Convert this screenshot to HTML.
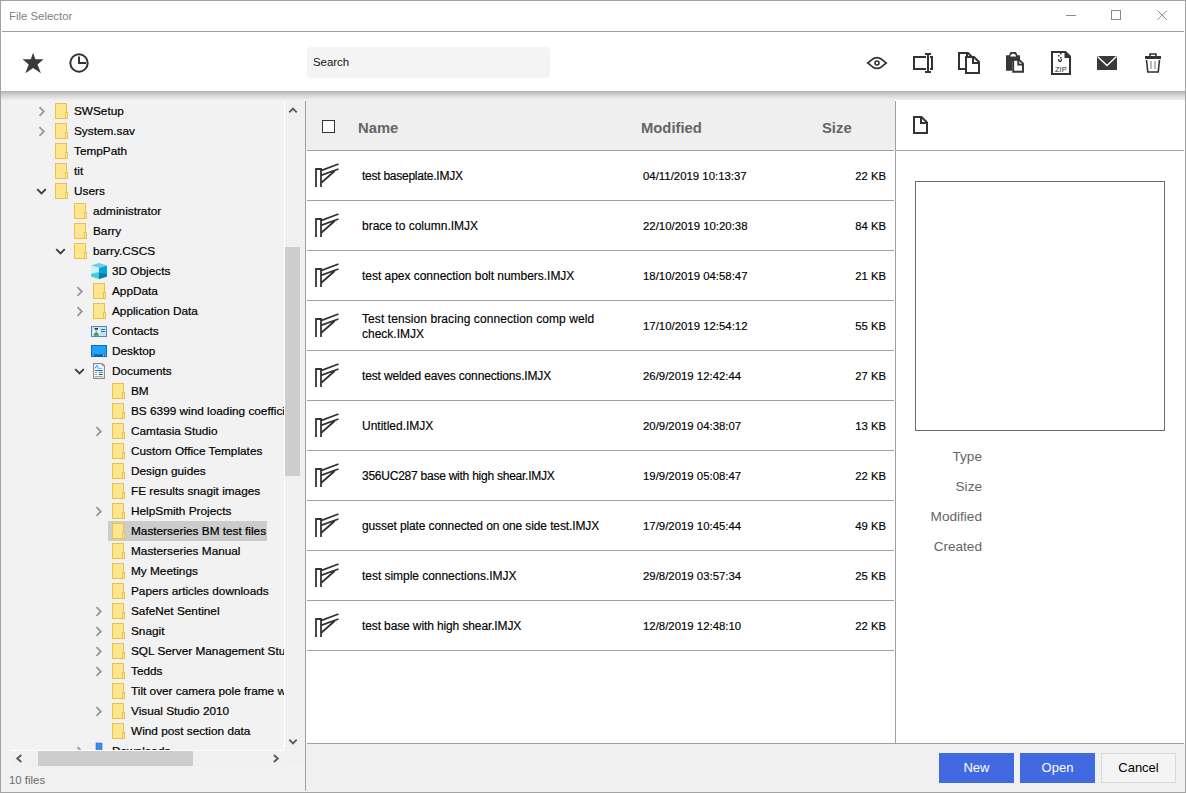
<!DOCTYPE html>
<html><head><meta charset="utf-8">
<style>
*{margin:0;padding:0;box-sizing:border-box}
html,body{width:1186px;height:793px;overflow:hidden;background:#fff;font-family:"Liberation Sans", sans-serif;}
.abs{position:absolute}
#win{position:absolute;left:0;top:0;width:1186px;height:793px;border:1px solid #a2a2a2;background:#fff;overflow:hidden}
.title{position:absolute;left:9px;top:1px;height:31px;line-height:31px;font-size:11.4px;color:#7f7f7f}
.tline{position:absolute;left:2px;top:31px;width:1182px;height:1px;background:#9f9f9f}
.ic{position:absolute;overflow:visible}
.search{position:absolute;left:307px;top:47px;width:243px;height:31px;background:#f4f4f4;border-radius:4px}
.search span{position:absolute;left:6px;top:0;line-height:31px;font-size:11.4px;color:#111}
.shadow{position:absolute;left:1px;top:91px;width:1184px;height:9px;background:linear-gradient(#b2b2b2,#d4d4d4 45%,#f0f0f0)}
.tree{position:absolute;left:1px;top:100px;width:283px;height:650px;background:#f2f2f2;overflow:hidden}
.treein{position:absolute;left:-1px;top:-100px;width:283px;height:900px}
.tt{position:absolute;white-space:nowrap;font-size:11.8px;line-height:20px;color:#000;-webkit-text-stroke:0.2px #000}
.sel{position:absolute;background:#cccccc}
.vline{position:absolute;background:#a0a0a0}
.row{position:absolute;left:306px;width:588px;height:50px}
.row::after{content:"";position:absolute;left:1px;right:0;bottom:0;height:1px;background:#a0a0a0}
.fic{position:absolute;left:9px;top:12px;overflow:visible}
.nm{position:absolute;left:56px;top:1px;width:260px;height:49px;display:flex;align-items:center;font-size:12px;line-height:14.6px;color:#000;-webkit-text-stroke:0.15px #000}
.dt{position:absolute;left:337px;top:1px;line-height:49px;font-size:11.4px;color:#000;-webkit-text-stroke:0.15px #000;white-space:nowrap}
.sz{position:absolute;right:8px;top:1px;line-height:49px;font-size:11.3px;color:#000;-webkit-text-stroke:0.15px #000;white-space:nowrap}
.hdr{position:absolute;font-size:14.8px;font-weight:bold;color:#666;line-height:49px;top:104px}
.lbl{position:absolute;left:880px;width:102px;text-align:right;font-size:13.6px;color:#666;line-height:30px;margin-top:1px}
.btn{position:absolute;top:753px;width:75px;height:30px;line-height:30px;text-align:center;font-size:13px}
</style></head><body>
<div id="win">
</div>
<div class="abs" style="left:1px;top:750px;width:304px;height:42px;background:#f2f2f2"></div>
<div class="title">File Selector</div>
<div class="tline"></div>
<!-- window controls -->
<svg class="ic" style="left:1060px;top:5px" width="120" height="22" viewBox="1060 5 120 22">
 <path d="M1066 15.5 H1076" stroke="#8a8a8a" stroke-width="1"/>
 <rect x="1111.5" y="10.5" width="9" height="9" fill="none" stroke="#8a8a8a"/>
 <path d="M1157.5 10.5 L1166.8 19.8 M1166.8 10.5 L1157.5 19.8" stroke="#8a8a8a" stroke-width="1"/>
</svg>
<!-- toolbar icons -->
<svg class="ic" style="left:0;top:32px" width="1186" height="58" viewBox="0 32 1186 58">
 <polygon points="33.1,52.8 35.4,59.2 43.6,59.2 37.5,64.4 40.9,73.3 33.1,68 25.3,73.3 28.7,64.4 22.6,59.2 30.8,59.2" fill="#3a3a3a"/>
 <circle cx="79" cy="63" r="8.7" fill="none" stroke="#333" stroke-width="2"/>
 <path d="M79 56.5 V63 H86" fill="none" stroke="#333" stroke-width="2"/>
 <path d="M867.8 63 L872.3 59.3 Q877 55.9 881.7 59.3 L886.2 63 L881.7 66.7 Q877 70.1 872.3 66.7 Z" fill="none" stroke="#333" stroke-width="1.7" stroke-linejoin="miter"/>
 <circle cx="877" cy="63" r="2" fill="none" stroke="#333" stroke-width="1.6"/>
 <path d="M926 57 H914 V69 H926" fill="none" stroke="#333" stroke-width="2"/>
 <path d="M925 54 H931 M928 54 V72 M925 72 H931 M930 57 H932 V69 H930" fill="none" stroke="#333" stroke-width="2"/>
 <path d="M966 69 H959 V53 H968 L971.5 56.5 M967 53 V57" fill="none" stroke="#333" stroke-width="2"/>
 <path d="M966 57 H974 L979 62 V73 H966 Z M973 57 V63 H979" fill="none" stroke="#333" stroke-width="2"/>
 <path d="M1006 55.2 H1009 L1010.5 52 H1016 L1017.5 55.2 H1020 V61 H1012 V70.8 H1006 Z" fill="#383838"/><path d="M1010.3 56.4 Q1010.6 53.7 1013.2 53.7 Q1015.8 53.7 1016.1 56.4 Z" fill="#fff"/>
 <path d="M1013.2 59.9 H1019.2 L1023 63.7 V71.8 H1013.2 Z" fill="#fff" stroke="#333" stroke-width="1.9"/><path d="M1018.3 59.9 V64.6 H1023" fill="none" stroke="#333" stroke-width="1.9"/>
 <path d="M1052 52 H1065.5 L1070 56.5 V74 H1052 Z" fill="none" stroke="#333" stroke-width="2"/>
 <polygon points="1064.5,52 1071,58 1064.5,58" fill="#333"/>
 <rect x="1060" y="53" width="1.5" height="1.5" fill="#333"/><rect x="1058" y="55" width="1.5" height="1.5" fill="#333"/><rect x="1060" y="57" width="1.5" height="1.5" fill="#333"/>
 <path d="M1058.5 59 Q1058.5 61.5 1060.5 61.5 Q1061.5 61 1061.5 59" fill="none" stroke="#333" stroke-width="1.3"/>
 <text x="1055" y="72" font-family="Liberation Sans" font-size="7.5" fill="#333">ZIP</text>
 <rect x="1097" y="56" width="20" height="14" fill="#3a3a3a"/>
 <path d="M1097.5 56.5 L1107 65.5 L1116.5 56.5" fill="none" stroke="#fff" stroke-width="1.4"/>
 <rect x="1145" y="56" width="16" height="3" fill="#333"/>
 <path d="M1150 56 V54 H1156 V56" fill="none" stroke="#333" stroke-width="1.6"/>
 <path d="M1146.5 60 L1147.8 72 H1158.2 L1159.5 60" fill="none" stroke="#333" stroke-width="1.6"/>
 <path d="M1151 61 V69 M1155 61 V69" stroke="#8a8a8a" stroke-width="1.2"/>
</svg>
<div class="search"><span>Search</span></div>
<div class="shadow"></div>
<!-- tree -->
<div class="tree"><div class="treein">
<svg class="ic" style="left:38px;top:106px" width="8" height="11" viewBox="0 0 8 11"><path d="M1.5 1.2 L5.8 5.5 L1.5 9.8" fill="none" stroke="#999" stroke-width="1.8"/></svg>
<svg class="ic" style="left:55px;top:103px" width="14" height="17" viewBox="0 0 14 17"><rect x="0.5" y="0.5" width="11" height="15" fill="#fde68e" stroke="#e8c24a"/><rect x="10.5" y="9.5" width="2" height="6" fill="#fdeaa0" stroke="#e8c24a"/></svg>
<div class="tt" style="left:74px;top:101px">SWSetup</div>
<svg class="ic" style="left:38px;top:126px" width="8" height="11" viewBox="0 0 8 11"><path d="M1.5 1.2 L5.8 5.5 L1.5 9.8" fill="none" stroke="#999" stroke-width="1.8"/></svg>
<svg class="ic" style="left:55px;top:123px" width="14" height="17" viewBox="0 0 14 17"><rect x="0.5" y="0.5" width="11" height="15" fill="#fde68e" stroke="#e8c24a"/><rect x="10.5" y="9.5" width="2" height="6" fill="#fdeaa0" stroke="#e8c24a"/></svg>
<div class="tt" style="left:74px;top:121px">System.sav</div>

<svg class="ic" style="left:55px;top:143px" width="14" height="17" viewBox="0 0 14 17"><rect x="0.5" y="0.5" width="11" height="15" fill="#fde68e" stroke="#e8c24a"/><rect x="10.5" y="9.5" width="2" height="6" fill="#fdeaa0" stroke="#e8c24a"/></svg>
<div class="tt" style="left:74px;top:141px">TempPath</div>

<svg class="ic" style="left:55px;top:163px" width="14" height="17" viewBox="0 0 14 17"><rect x="0.5" y="0.5" width="11" height="15" fill="#fde68e" stroke="#e8c24a"/><rect x="10.5" y="9.5" width="2" height="6" fill="#fdeaa0" stroke="#e8c24a"/></svg>
<div class="tt" style="left:74px;top:161px">tit</div>
<svg class="ic" style="left:36px;top:188px" width="11" height="8" viewBox="0 0 11 8"><path d="M1.2 1.2 L5.5 5.5 L9.8 1.2" fill="none" stroke="#3a3a3a" stroke-width="1.8"/></svg>
<svg class="ic" style="left:55px;top:183px" width="14" height="17" viewBox="0 0 14 17"><rect x="0.5" y="0.5" width="11" height="15" fill="#fde68e" stroke="#e8c24a"/><rect x="10.5" y="9.5" width="2" height="6" fill="#fdeaa0" stroke="#e8c24a"/></svg>
<div class="tt" style="left:74px;top:181px">Users</div>

<svg class="ic" style="left:74px;top:203px" width="14" height="17" viewBox="0 0 14 17"><rect x="0.5" y="0.5" width="11" height="15" fill="#fde68e" stroke="#e8c24a"/><rect x="10.5" y="9.5" width="2" height="6" fill="#fdeaa0" stroke="#e8c24a"/></svg>
<div class="tt" style="left:93px;top:201px">administrator</div>

<svg class="ic" style="left:74px;top:223px" width="14" height="17" viewBox="0 0 14 17"><rect x="0.5" y="0.5" width="11" height="15" fill="#fde68e" stroke="#e8c24a"/><rect x="10.5" y="9.5" width="2" height="6" fill="#fdeaa0" stroke="#e8c24a"/></svg>
<div class="tt" style="left:93px;top:221px">Barry</div>
<svg class="ic" style="left:55px;top:248px" width="11" height="8" viewBox="0 0 11 8"><path d="M1.2 1.2 L5.5 5.5 L9.8 1.2" fill="none" stroke="#3a3a3a" stroke-width="1.8"/></svg>
<svg class="ic" style="left:74px;top:243px" width="14" height="17" viewBox="0 0 14 17"><rect x="0.5" y="0.5" width="11" height="15" fill="#fde68e" stroke="#e8c24a"/><rect x="10.5" y="9.5" width="2" height="6" fill="#fdeaa0" stroke="#e8c24a"/></svg>
<div class="tt" style="left:93px;top:241px">barry.CSCS</div>

<svg class="ic" style="left:91px;top:263px" width="17" height="17" viewBox="0 0 17 17"><polygon points="0,2.5 8,0 16,2.5 8,5" fill="#62d2e4"/><polygon points="0,2.5 8,5 8,16 0,13.5" fill="#ccf0f5"/><polygon points="0,11 8,9 8,16 0,13.5" fill="#3ccfe0"/><polygon points="8,5 16,2.5 16,13.5 8,16" fill="#04a6d6"/><polygon points="8,10 16,11 16,13.5 8,16" fill="#0a7aa6"/></svg>
<div class="tt" style="left:112px;top:261px">3D Objects</div>
<svg class="ic" style="left:76px;top:286px" width="8" height="11" viewBox="0 0 8 11"><path d="M1.5 1.2 L5.8 5.5 L1.5 9.8" fill="none" stroke="#999" stroke-width="1.8"/></svg>
<svg class="ic" style="left:93px;top:283px" width="14" height="17" viewBox="0 0 14 17"><rect x="0.5" y="0.5" width="11" height="15" fill="#fde68e" stroke="#e8c24a"/><rect x="10.5" y="9.5" width="2" height="6" fill="#fdeaa0" stroke="#e8c24a"/></svg>
<div class="tt" style="left:112px;top:281px">AppData</div>
<svg class="ic" style="left:76px;top:306px" width="8" height="11" viewBox="0 0 8 11"><path d="M1.5 1.2 L5.8 5.5 L1.5 9.8" fill="none" stroke="#999" stroke-width="1.8"/></svg>
<svg class="ic" style="left:93px;top:303px" width="14" height="17" viewBox="0 0 14 17"><rect x="0.5" y="0.5" width="11" height="15" fill="#fde68e" stroke="#e8c24a"/><rect x="10.5" y="9.5" width="2" height="6" fill="#fdeaa0" stroke="#e8c24a"/></svg>
<div class="tt" style="left:112px;top:301px">Application Data</div>

<svg class="ic" style="left:91px;top:323px" width="17" height="17" viewBox="0 0 17 17"><rect x="0.5" y="3.5" width="15" height="10" fill="#c5e2f6" stroke="#4a88c0"/><circle cx="5.2" cy="8.6" r="3.4" fill="#eef6fb"/><rect x="3.6" y="5" width="3.4" height="1.8" fill="#3a3028"/><rect x="4.3" y="6.5" width="2" height="2.6" fill="#d4a884"/><path d="M2.8 12.8 Q3 9.4 5.3 9.2 Q7.6 9.4 7.8 12.8 Z" fill="#3c9a58"/><rect x="10" y="6" width="4" height="1" fill="#3a6a98"/><rect x="10" y="8" width="4" height="1" fill="#3a6a98"/></svg>
<div class="tt" style="left:112px;top:321px">Contacts</div>

<svg class="ic" style="left:91px;top:343px" width="17" height="17" viewBox="0 0 17 17"><rect x="0.5" y="2.5" width="15" height="11" fill="#1ea2fb" stroke="#0a6cb8"/><rect x="1" y="11.5" width="14" height="1.6" fill="#0d5a98"/><rect x="1.5" y="11.8" width="1" height="1" fill="#fff"/><rect x="12" y="11.8" width="1" height="1" fill="#fff"/><rect x="14" y="11.8" width="1" height="1" fill="#fff"/></svg>
<div class="tt" style="left:112px;top:341px">Desktop</div>
<svg class="ic" style="left:74px;top:368px" width="11" height="8" viewBox="0 0 11 8"><path d="M1.2 1.2 L5.5 5.5 L9.8 1.2" fill="none" stroke="#3a3a3a" stroke-width="1.8"/></svg>
<svg class="ic" style="left:93px;top:363px" width="14" height="17" viewBox="0 0 14 17"><path d="M0.6 0.6 H9.2 L11.4 2.8 V15.4 H0.6 Z" fill="#fff" stroke="#8a8a8a" stroke-width="1.1"/><path d="M9.2 0.6 V2.8 H11.4" fill="none" stroke="#8a8a8a" stroke-width="1"/><path d="M1.8 5.6 L3.9 2.2 L4.5 5.4" fill="none" stroke="#3a9ae8" stroke-width="1"/><rect x="5.2" y="4.8" width="4" height="1" fill="#5ab0ea"/><rect x="5.4" y="2.9" width="1" height="1" fill="#5ab0ea"/><rect x="1.8" y="7" width="8" height="1.1" fill="#0a7ad0"/><rect x="1.8" y="9" width="2.6" height="0.9" fill="#a0a0a0"/><rect x="5.8" y="8.9" width="3.9" height="1.1" fill="#4a8ef0"/><rect x="1.8" y="11" width="2.6" height="0.9" fill="#a0a0a0"/><rect x="5.8" y="10.9" width="3.9" height="1.1" fill="#2a5a30"/><rect x="1.8" y="13" width="7.9" height="0.9" fill="#a0a0a0"/></svg>
<div class="tt" style="left:112px;top:361px">Documents</div>

<svg class="ic" style="left:112px;top:383px" width="14" height="17" viewBox="0 0 14 17"><rect x="0.5" y="0.5" width="11" height="15" fill="#fde68e" stroke="#e8c24a"/><rect x="10.5" y="9.5" width="2" height="6" fill="#fdeaa0" stroke="#e8c24a"/></svg>
<div class="tt" style="left:131px;top:381px">BM</div>

<svg class="ic" style="left:112px;top:403px" width="14" height="17" viewBox="0 0 14 17"><rect x="0.5" y="0.5" width="11" height="15" fill="#fde68e" stroke="#e8c24a"/><rect x="10.5" y="9.5" width="2" height="6" fill="#fdeaa0" stroke="#e8c24a"/></svg>
<div class="tt" style="left:131px;top:401px">BS 6399 wind loading coefficients</div>
<svg class="ic" style="left:95px;top:426px" width="8" height="11" viewBox="0 0 8 11"><path d="M1.5 1.2 L5.8 5.5 L1.5 9.8" fill="none" stroke="#999" stroke-width="1.8"/></svg>
<svg class="ic" style="left:112px;top:423px" width="14" height="17" viewBox="0 0 14 17"><rect x="0.5" y="0.5" width="11" height="15" fill="#fde68e" stroke="#e8c24a"/><rect x="10.5" y="9.5" width="2" height="6" fill="#fdeaa0" stroke="#e8c24a"/></svg>
<div class="tt" style="left:131px;top:421px">Camtasia Studio</div>

<svg class="ic" style="left:112px;top:443px" width="14" height="17" viewBox="0 0 14 17"><rect x="0.5" y="0.5" width="11" height="15" fill="#fde68e" stroke="#e8c24a"/><rect x="10.5" y="9.5" width="2" height="6" fill="#fdeaa0" stroke="#e8c24a"/></svg>
<div class="tt" style="left:131px;top:441px">Custom Office Templates</div>

<svg class="ic" style="left:112px;top:463px" width="14" height="17" viewBox="0 0 14 17"><rect x="0.5" y="0.5" width="11" height="15" fill="#fde68e" stroke="#e8c24a"/><rect x="10.5" y="9.5" width="2" height="6" fill="#fdeaa0" stroke="#e8c24a"/></svg>
<div class="tt" style="left:131px;top:461px">Design guides</div>

<svg class="ic" style="left:112px;top:483px" width="14" height="17" viewBox="0 0 14 17"><rect x="0.5" y="0.5" width="11" height="15" fill="#fde68e" stroke="#e8c24a"/><rect x="10.5" y="9.5" width="2" height="6" fill="#fdeaa0" stroke="#e8c24a"/></svg>
<div class="tt" style="left:131px;top:481px">FE results snagit images</div>
<svg class="ic" style="left:95px;top:506px" width="8" height="11" viewBox="0 0 8 11"><path d="M1.5 1.2 L5.8 5.5 L1.5 9.8" fill="none" stroke="#999" stroke-width="1.8"/></svg>
<svg class="ic" style="left:112px;top:503px" width="14" height="17" viewBox="0 0 14 17"><rect x="0.5" y="0.5" width="11" height="15" fill="#fde68e" stroke="#e8c24a"/><rect x="10.5" y="9.5" width="2" height="6" fill="#fdeaa0" stroke="#e8c24a"/></svg>
<div class="tt" style="left:131px;top:501px">HelpSmith Projects</div>
<div class="sel" style="left:108px;top:521px;width:159px;height:20px"></div>

<svg class="ic" style="left:112px;top:523px" width="14" height="17" viewBox="0 0 14 17"><rect x="0.5" y="0.5" width="11" height="15" fill="#fde68e" stroke="#e8c24a"/><rect x="10.5" y="9.5" width="2" height="6" fill="#fdeaa0" stroke="#e8c24a"/></svg>
<div class="tt" style="left:131px;top:521px">Masterseries BM test files</div>

<svg class="ic" style="left:112px;top:543px" width="14" height="17" viewBox="0 0 14 17"><rect x="0.5" y="0.5" width="11" height="15" fill="#fde68e" stroke="#e8c24a"/><rect x="10.5" y="9.5" width="2" height="6" fill="#fdeaa0" stroke="#e8c24a"/></svg>
<div class="tt" style="left:131px;top:541px">Masterseries Manual</div>

<svg class="ic" style="left:112px;top:563px" width="14" height="17" viewBox="0 0 14 17"><rect x="0.5" y="0.5" width="11" height="15" fill="#fde68e" stroke="#e8c24a"/><rect x="10.5" y="9.5" width="2" height="6" fill="#fdeaa0" stroke="#e8c24a"/></svg>
<div class="tt" style="left:131px;top:561px">My Meetings</div>

<svg class="ic" style="left:112px;top:583px" width="14" height="17" viewBox="0 0 14 17"><rect x="0.5" y="0.5" width="11" height="15" fill="#fde68e" stroke="#e8c24a"/><rect x="10.5" y="9.5" width="2" height="6" fill="#fdeaa0" stroke="#e8c24a"/></svg>
<div class="tt" style="left:131px;top:581px">Papers articles downloads</div>
<svg class="ic" style="left:95px;top:606px" width="8" height="11" viewBox="0 0 8 11"><path d="M1.5 1.2 L5.8 5.5 L1.5 9.8" fill="none" stroke="#999" stroke-width="1.8"/></svg>
<svg class="ic" style="left:112px;top:603px" width="14" height="17" viewBox="0 0 14 17"><rect x="0.5" y="0.5" width="11" height="15" fill="#fde68e" stroke="#e8c24a"/><rect x="10.5" y="9.5" width="2" height="6" fill="#fdeaa0" stroke="#e8c24a"/></svg>
<div class="tt" style="left:131px;top:601px">SafeNet Sentinel</div>
<svg class="ic" style="left:95px;top:626px" width="8" height="11" viewBox="0 0 8 11"><path d="M1.5 1.2 L5.8 5.5 L1.5 9.8" fill="none" stroke="#999" stroke-width="1.8"/></svg>
<svg class="ic" style="left:112px;top:623px" width="14" height="17" viewBox="0 0 14 17"><rect x="0.5" y="0.5" width="11" height="15" fill="#fde68e" stroke="#e8c24a"/><rect x="10.5" y="9.5" width="2" height="6" fill="#fdeaa0" stroke="#e8c24a"/></svg>
<div class="tt" style="left:131px;top:621px">Snagit</div>
<svg class="ic" style="left:95px;top:646px" width="8" height="11" viewBox="0 0 8 11"><path d="M1.5 1.2 L5.8 5.5 L1.5 9.8" fill="none" stroke="#999" stroke-width="1.8"/></svg>
<svg class="ic" style="left:112px;top:643px" width="14" height="17" viewBox="0 0 14 17"><rect x="0.5" y="0.5" width="11" height="15" fill="#fde68e" stroke="#e8c24a"/><rect x="10.5" y="9.5" width="2" height="6" fill="#fdeaa0" stroke="#e8c24a"/></svg>
<div class="tt" style="left:131px;top:641px">SQL Server Management Studio</div>
<svg class="ic" style="left:95px;top:666px" width="8" height="11" viewBox="0 0 8 11"><path d="M1.5 1.2 L5.8 5.5 L1.5 9.8" fill="none" stroke="#999" stroke-width="1.8"/></svg>
<svg class="ic" style="left:112px;top:663px" width="14" height="17" viewBox="0 0 14 17"><rect x="0.5" y="0.5" width="11" height="15" fill="#fde68e" stroke="#e8c24a"/><rect x="10.5" y="9.5" width="2" height="6" fill="#fdeaa0" stroke="#e8c24a"/></svg>
<div class="tt" style="left:131px;top:661px">Tedds</div>

<svg class="ic" style="left:112px;top:683px" width="14" height="17" viewBox="0 0 14 17"><rect x="0.5" y="0.5" width="11" height="15" fill="#fde68e" stroke="#e8c24a"/><rect x="10.5" y="9.5" width="2" height="6" fill="#fdeaa0" stroke="#e8c24a"/></svg>
<div class="tt" style="left:131px;top:681px">Tilt over camera pole frame with</div>
<svg class="ic" style="left:95px;top:706px" width="8" height="11" viewBox="0 0 8 11"><path d="M1.5 1.2 L5.8 5.5 L1.5 9.8" fill="none" stroke="#999" stroke-width="1.8"/></svg>
<svg class="ic" style="left:112px;top:703px" width="14" height="17" viewBox="0 0 14 17"><rect x="0.5" y="0.5" width="11" height="15" fill="#fde68e" stroke="#e8c24a"/><rect x="10.5" y="9.5" width="2" height="6" fill="#fdeaa0" stroke="#e8c24a"/></svg>
<div class="tt" style="left:131px;top:701px">Visual Studio 2010</div>

<svg class="ic" style="left:112px;top:723px" width="14" height="17" viewBox="0 0 14 17"><rect x="0.5" y="0.5" width="11" height="15" fill="#fde68e" stroke="#e8c24a"/><rect x="10.5" y="9.5" width="2" height="6" fill="#fdeaa0" stroke="#e8c24a"/></svg>
<div class="tt" style="left:131px;top:721px">Wind post section data</div>
<svg class="ic" style="left:76px;top:746px" width="8" height="11" viewBox="0 0 8 11"><path d="M1.5 1.2 L5.8 5.5 L1.5 9.8" fill="none" stroke="#999" stroke-width="1.8"/></svg>
<svg class="ic" style="left:93px;top:743px" width="14" height="17" viewBox="0 0 14 17"><rect x="3" y="0" width="6" height="16" fill="#3a8ee8" stroke="#2a70c8" stroke-width="0.6"/></svg>
<div class="tt" style="left:112px;top:741px">Downloads</div>
</div></div>
<div class="abs" style="left:284px;top:100px;width:1px;height:650px;background:#fff"></div>
<!-- vertical scrollbar -->
<div class="abs" style="left:285px;top:100px;width:20px;height:666px;background:#f0f0f0"></div>
<div class="abs" style="left:285px;top:247px;width:15px;height:229px;background:#cdcdcd"></div>
<svg class="ic" style="left:284px;top:100px" width="21" height="650" viewBox="0 0 21 650">
 <path d="M5.3 12.4 L9 8.6 L12.7 12.4" fill="none" stroke="#5a5a5a" stroke-width="1.9"/>
 <path d="M5.3 639.6 L9 643.4 L12.7 639.6" fill="none" stroke="#5a5a5a" stroke-width="1.9"/>
</svg>
<!-- horizontal scrollbar -->
<div class="abs" style="left:11px;top:750px;width:273px;height:1px;background:#fff"></div>
<div class="abs" style="left:11px;top:751px;width:273px;height:16px;background:#f0f0f0"></div>
<div class="abs" style="left:38px;top:751px;width:155px;height:15px;background:#cdcdcd"></div>
<svg class="ic" style="left:0;top:750px" width="300" height="17" viewBox="0 750 300 17">
 <path d="M21.3 755 L17.3 758.5 L21.3 762" fill="none" stroke="#5a5a5a" stroke-width="1.9"/>
 <path d="M273.8 755 L277.8 758.5 L273.8 762" fill="none" stroke="#5a5a5a" stroke-width="1.9"/>
</svg>
<div class="abs" style="left:9px;top:771px;line-height:18px;font-size:11.4px;color:#6a6a6a">10 files</div>
<!-- file list -->
<div class="vline" style="left:305px;top:101px;width:1px;height:690px"></div>
<div class="abs" style="left:306px;top:100px;width:589px;height:50px;background:#efefef"></div>
<div class="abs" style="left:307px;top:150px;width:587px;height:1px;background:#a0a0a0"></div>
<div class="abs" style="left:322px;top:120px;width:13px;height:13px;border:1.3px solid #333;background:#fff"></div>
<div class="hdr" style="left:358px">Name</div>
<div class="hdr" style="left:641px">Modified</div>
<div class="hdr" style="left:822px">Size</div>
<div class="row" style="top:151px"><svg class="fic" width="26" height="26" viewBox="0 0 26 26"><path d="M1 24 V6 H6 V24 M6 7.6 L23.5 1 M6 12.4 L23.5 6 M6 20 L19.7 8" fill="none" stroke="#333" stroke-width="1.8"/></svg><div class="nm"><div><span style="letter-spacing:-0.25px">test baseplate.IMJX</span></div></div><div class="dt">04/11/2019 10:13:37</div><div class="sz">22 KB</div></div>
<div class="row" style="top:201px"><svg class="fic" width="26" height="26" viewBox="0 0 26 26"><path d="M1 24 V6 H6 V24 M6 7.6 L23.5 1 M6 12.4 L23.5 6 M6 20 L19.7 8" fill="none" stroke="#333" stroke-width="1.8"/></svg><div class="nm"><div>brace to column.IMJX</div></div><div class="dt">22/10/2019 10:20:38</div><div class="sz">84 KB</div></div>
<div class="row" style="top:251px"><svg class="fic" width="26" height="26" viewBox="0 0 26 26"><path d="M1 24 V6 H6 V24 M6 7.6 L23.5 1 M6 12.4 L23.5 6 M6 20 L19.7 8" fill="none" stroke="#333" stroke-width="1.8"/></svg><div class="nm"><div><span style="letter-spacing:-0.03px">test apex connection bolt numbers.IMJX</span></div></div><div class="dt">18/10/2019 04:58:47</div><div class="sz">21 KB</div></div>
<div class="row" style="top:301px"><svg class="fic" width="26" height="26" viewBox="0 0 26 26"><path d="M1 24 V6 H6 V24 M6 7.6 L23.5 1 M6 12.4 L23.5 6 M6 20 L19.7 8" fill="none" stroke="#333" stroke-width="1.8"/></svg><div class="nm"><div><span style="letter-spacing:0.085px">Test tension bracing connection comp weld</span><br>check.IMJX</div></div><div class="dt">17/10/2019 12:54:12</div><div class="sz">55 KB</div></div>
<div class="row" style="top:351px"><svg class="fic" width="26" height="26" viewBox="0 0 26 26"><path d="M1 24 V6 H6 V24 M6 7.6 L23.5 1 M6 12.4 L23.5 6 M6 20 L19.7 8" fill="none" stroke="#333" stroke-width="1.8"/></svg><div class="nm"><div><span style="letter-spacing:-0.148px">test welded eaves connections.IMJX</span></div></div><div class="dt">26/9/2019 12:42:44</div><div class="sz">27 KB</div></div>
<div class="row" style="top:401px"><svg class="fic" width="26" height="26" viewBox="0 0 26 26"><path d="M1 24 V6 H6 V24 M6 7.6 L23.5 1 M6 12.4 L23.5 6 M6 20 L19.7 8" fill="none" stroke="#333" stroke-width="1.8"/></svg><div class="nm"><div>Untitled.IMJX</div></div><div class="dt">20/9/2019 04:38:07</div><div class="sz">13 KB</div></div>
<div class="row" style="top:451px"><svg class="fic" width="26" height="26" viewBox="0 0 26 26"><path d="M1 24 V6 H6 V24 M6 7.6 L23.5 1 M6 12.4 L23.5 6 M6 20 L19.7 8" fill="none" stroke="#333" stroke-width="1.8"/></svg><div class="nm"><div><span style="letter-spacing:-0.242px">356UC287 base with high shear.IMJX</span></div></div><div class="dt">19/9/2019 05:08:47</div><div class="sz">22 KB</div></div>
<div class="row" style="top:501px"><svg class="fic" width="26" height="26" viewBox="0 0 26 26"><path d="M1 24 V6 H6 V24 M6 7.6 L23.5 1 M6 12.4 L23.5 6 M6 20 L19.7 8" fill="none" stroke="#333" stroke-width="1.8"/></svg><div class="nm"><div><span style="letter-spacing:-0.114px">gusset plate connected on one side test.IMJX</span></div></div><div class="dt">17/9/2019 10:45:44</div><div class="sz">49 KB</div></div>
<div class="row" style="top:551px"><svg class="fic" width="26" height="26" viewBox="0 0 26 26"><path d="M1 24 V6 H6 V24 M6 7.6 L23.5 1 M6 12.4 L23.5 6 M6 20 L19.7 8" fill="none" stroke="#333" stroke-width="1.8"/></svg><div class="nm"><div><span style="letter-spacing:-0.037px">test simple connections.IMJX</span></div></div><div class="dt">29/8/2019 03:57:34</div><div class="sz">25 KB</div></div>
<div class="row" style="top:601px"><svg class="fic" width="26" height="26" viewBox="0 0 26 26"><path d="M1 24 V6 H6 V24 M6 7.6 L23.5 1 M6 12.4 L23.5 6 M6 20 L19.7 8" fill="none" stroke="#333" stroke-width="1.8"/></svg><div class="nm"><div><span style="letter-spacing:-0.117px">test base with high shear.IMJX</span></div></div><div class="dt">12/8/2019 12:48:10</div><div class="sz">22 KB</div></div>
<!-- preview -->
<div class="vline" style="left:895px;top:101px;width:1px;height:642px"></div>
<div class="abs" style="left:896px;top:150px;width:288px;height:1px;background:#a0a0a0"></div>
<svg class="ic" style="left:912px;top:115px" width="18" height="20" viewBox="0 0 18 20">
 <path d="M2 2 H9.5 L15 7.5 V18 H2 Z M9 2 V8 H15" fill="none" stroke="#333" stroke-width="2"/>
</svg>
<div class="abs" style="left:915px;top:181px;width:250px;height:250px;border:1px solid #6a6a6a"></div>
<div class="lbl" style="top:441px">Type</div>
<div class="lbl" style="top:471px">Size</div>
<div class="lbl" style="top:501px">Modified</div>
<div class="lbl" style="top:531px">Created</div>
<!-- bottom bar -->
<div class="abs" style="left:306px;top:744px;width:879px;height:48px;background:#f0f0f0"></div>
<div class="abs" style="left:307px;top:743px;width:877px;height:1px;background:#a0a0a0"></div>
<div class="btn" style="left:939px;background:#4169e1;color:#fff">New</div>
<div class="btn" style="left:1020px;background:#4169e1;color:#fff">Open</div>
<div class="btn" style="left:1101px;background:#f4f4f4;border:1px solid #dadada;color:#000;line-height:28px">Cancel</div>

</body></html>
